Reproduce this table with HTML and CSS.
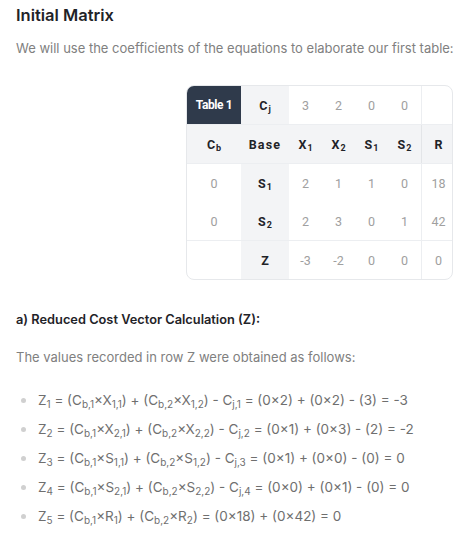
FILE: index.html
```html
<!DOCTYPE html>
<html>
<head>
<meta charset="utf-8">
<link rel="stylesheet" href="styles.css">
</head>
<body>
<h2 class="title">Initial Matrix</h2>
<p class="text">We will use the coefficients of the equations to elaborate our first table:</p>
<div class="table-wrap">
<table class="matrix">
<tr class="row-cj">
<td class="dark">Table 1</td>
<td class="base hd">C<sub>j</sub></td>
<td>3</td><td>2</td><td>0</td><td>0</td><td class="rcol"></td>
</tr>
<tr class="row-head">
<td class="hd">C<sub>b</sub></td>
<td class="hd spaced">Base</td>
<td class="hd">X<sub>1</sub></td>
<td class="hd">X<sub>2</sub></td>
<td class="hd">S<sub>1</sub></td>
<td class="hd">S<sub>2</sub></td>
<td class="hd rcol">R</td>
</tr>
<tr class="row-s1">
<td>0</td><td class="base hd">S<sub>1</sub></td>
<td>2</td><td>1</td><td>1</td><td>0</td><td class="rcol">18</td>
</tr>
<tr class="row-s2">
<td>0</td><td class="base hd">S<sub>2</sub></td>
<td>2</td><td>3</td><td>0</td><td>1</td><td class="rcol">42</td>
</tr>
<tr class="row-z">
<td></td><td class="base hd">Z</td>
<td>-3</td><td>-2</td><td>0</td><td>0</td><td class="rcol">0</td>
</tr>
</table>
</div>
<h3 class="subtitle">a) Reduced Cost Vector Calculation (Z):</h3>
<p class="text">The values recorded in row Z were obtained as follows:</p>
<ul class="calc">
<li>Z<sub>1</sub> = (C<sub>b,1</sub>×X<sub>1,1</sub>) + (C<sub>b,2</sub>×X<sub>1,2</sub>) - C<sub>j,1</sub> = (0×2) + (0×2) - (3) = -3</li>
<li>Z<sub>2</sub> = (C<sub>b,1</sub>×X<sub>2,1</sub>) + (C<sub>b,2</sub>×X<sub>2,2</sub>) - C<sub>j,2</sub> = (0×1) + (0×3) - (2) = -2</li>
<li>Z<sub>3</sub> = (C<sub>b,1</sub>×S<sub>1,1</sub>) + (C<sub>b,2</sub>×S<sub>1,2</sub>) - C<sub>j,3</sub> = (0×1) + (0×0) - (0) = 0</li>
<li>Z<sub>4</sub> = (C<sub>b,1</sub>×S<sub>2,1</sub>) + (C<sub>b,2</sub>×S<sub>2,2</sub>) - C<sub>j,4</sub> = (0×0) + (0×1) - (0) = 0</li>
<li>Z<sub>5</sub> = (C<sub>b,1</sub>×R<sub>1</sub>) + (C<sub>b,2</sub>×R<sub>2</sub>) = (0×18) + (0×42) = 0</li>
</ul>
</body>
</html>
```
FILE: styles.css
```css
html, body {
  margin: 0;
  padding: 0;
  background: #ffffff;
}
body {
  font-family: Inter, "Noto Sans", sans-serif;
  padding: 0 16px;
  color: #777;
}
.title {
  margin: 0;
  padding-top: 3px;
  font-size: 16.5px;
  font-weight: 600;
  color: #1f2328;
  line-height: 24px;
}
.text {
  margin: 10px 0 0;
  font-size: 13px;
  line-height: 22px;
  color: #808080;
  white-space: nowrap;
}
.table-wrap {
  margin: 26px 5px 0 auto;
  width: 265px;
  border: 1px solid #e6e8eb;
  border-radius: 8px;
  overflow: hidden;
}
.matrix {
  border-collapse: collapse;
  width: 100%;
  table-layout: fixed;
  font-family: Roboto, "Liberation Sans", sans-serif;
  font-size: 12.5px;
  color: #a0a0a0;
}
.matrix td {
  text-align: center;
  padding: 0;
  height: 38px;
  width: 33px;
}
.matrix td:first-child {
  width: 54px;
}
.matrix td:nth-child(2) {
  width: 48px;
}
.matrix td.rcol {
  border-left: 1px solid #eceef1;
}
.matrix sub {
  font-size: 9px;
  vertical-align: -2px;
  line-height: 0;
  margin-left: 1px;
}
.dark {
  background: #2f3a4b;
  color: #ffffff;
  font-weight: 700;
  font-size: 12px;
  letter-spacing: -0.4px;
}
.hd {
  color: #1f2328;
  font-weight: 700;
}
.spaced {
  letter-spacing: 1.2px;
}
.base {
  background: #f3f4f6;
}
.row-head td {
  background: #f3f4f6;
  border-top: 1px solid #eceef1;
  border-bottom: 1px solid #eceef1;
}
.row-head td.rcol {
  border-left: 1px solid #e3e5e8;
}
.row-z td {
  border-top: 1px solid #eceef1;
}
.subtitle {
  margin: 30px 0 0;
  font-size: 12.8px;
  font-weight: 600;
  color: #1f2328;
  line-height: 20px;
}
.subtitle + .text {
  margin-top: 16px;
}
.calc {
  list-style: none;
  margin: 18px 0 0;
  padding: 0 0 0 22px;
  font-size: 13.5px;
  color: #6f6f6f;
}
.calc li {
  position: relative;
  line-height: 29px;
}
.calc li::before {
  content: "";
  position: absolute;
  left: -17px;
  top: 12px;
  width: 5px;
  height: 5px;
  border-radius: 50%;
  background: #d0d0d0;
}
.calc sub {
  font-size: 10px;
  vertical-align: -3px;
  line-height: 0;
}
```
